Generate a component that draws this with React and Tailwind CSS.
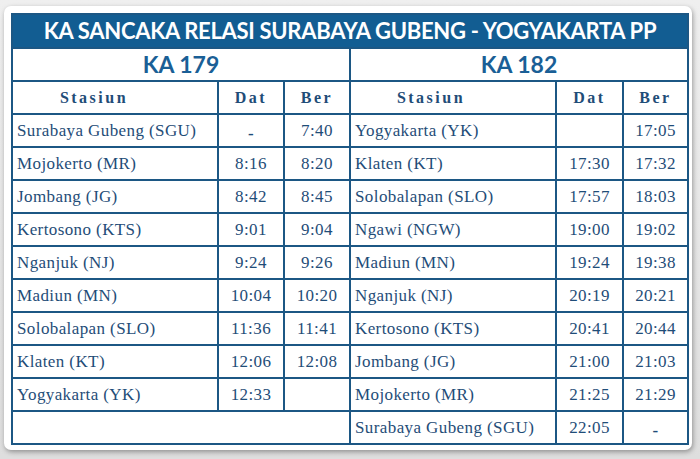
const LEFT = [
  ["Surabaya Gubeng (SGU)", "-", "7:40"],
  ["Mojokerto (MR)", "8:16", "8:20"],
  ["Jombang (JG)", "8:42", "8:45"],
  ["Kertosono (KTS)", "9:01", "9:04"],
  ["Nganjuk (NJ)", "9:24", "9:26"],
  ["Madiun (MN)", "10:04", "10:20"],
  ["Solobalapan (SLO)", "11:36", "11:41"],
  ["Klaten (KT)", "12:06", "12:08"],
  ["Yogyakarta (YK)", "12:33", ""],
];

const RIGHT = [
  ["Yogyakarta (YK)", "", "17:05"],
  ["Klaten (KT)", "17:30", "17:32"],
  ["Solobalapan (SLO)", "17:57", "18:03"],
  ["Ngawi (NGW)", "19:00", "19:02"],
  ["Madiun (MN)", "19:24", "19:38"],
  ["Nganjuk (NJ)", "20:19", "20:21"],
  ["Kertosono (KTS)", "20:41", "20:44"],
  ["Jombang (JG)", "21:00", "21:03"],
  ["Mojokerto (MR)", "21:25", "21:29"],
  ["Surabaya Gubeng (SGU)", "22:05", "-"],
];

const cell = "border-2 border-[#1c5784] h-[33px] p-0 leading-none";
const serif = { fontFamily: '"Liberation Serif", "Times New Roman", serif' };
const sans = { fontFamily: 'Lato, "Open Sans", sans-serif' };

function Time({ v }) {
  if (v === "-") return <span className="inline-block translate-y-[3px] font-bold">-</span>;
  return v;
}

function Row({ l, r }) {
  return (
    <tr className="text-[17px] text-[#1f4d78] tracking-[0.4px]" style={serif}>
      {l ? (
        <>
          <td className={`${cell} pl-[4px] text-left`}>{l[0]}</td>
          <td className={`${cell} text-center`}><Time v={l[1]} /></td>
          <td className={`${cell} text-center`}><Time v={l[2]} /></td>
        </>
      ) : (
        <td colSpan={3} className={cell}></td>
      )}
      <td className={`${cell} pl-[4px] text-left`}>{r[0]}</td>
      <td className={`${cell} text-center`}><Time v={r[1]} /></td>
      <td className={`${cell} text-center`}><Time v={r[2]} /></td>
    </tr>
  );
}

export default function App() {
  const rows = RIGHT.map((r, i) => ({ l: LEFT[i], r }));
  const head = "border-2 border-[#1c5784] h-[33px] p-0 leading-none text-center font-bold text-[16px] text-[#1f4d78] tracking-[2.5px]";
  const ka = "border-2 border-[#1c5784] h-[33px] p-0 leading-none text-center font-bold text-[23px] text-[#1a5f96]";
  return (
    <div className="w-[700px] h-[459px] bg-gradient-to-b from-[#efefef] to-[#dedede] pt-[6px] pl-[4px]">
      <div className="w-[688px] h-[444px] bg-white rounded-[7px] shadow-[1px_2px_5px_rgba(0,0,0,0.35)] pt-[7px] pl-[7px]">
        <table className="table-fixed border-collapse w-[676px]">
          <colgroup>
            <col className="w-[206px]" />
            <col className="w-[66px]" />
            <col className="w-[66px]" />
            <col className="w-[206px]" />
            <col className="w-[67px]" />
            <col className="w-[65px]" />
          </colgroup>
          <tbody>
            <tr>
              <td
                colSpan={6}
                className="bg-[#125d92] border-2 border-[#1c5784] h-[34px] p-0 leading-none text-center text-white font-bold text-[22px] tracking-[-0.3px]"
                style={sans}
              >
                KA SANCAKA RELASI SURABAYA GUBENG - YOGYAKARTA PP
              </td>
            </tr>
            <tr style={sans}>
              <td colSpan={3} className={ka}>KA 179</td>
              <td colSpan={3} className={ka}>KA 182</td>
            </tr>
            <tr style={serif}>
              <td className={`${head} pr-[42px]`}>Stasiun</td>
              <td className={head}>Dat</td>
              <td className={head}>Ber</td>
              <td className={`${head} pr-[44px]`}>Stasiun</td>
              <td className={head}>Dat</td>
              <td className={head}>Ber</td>
            </tr>
            {rows.map((x, i) => (
              <Row key={i} l={x.l} r={x.r} />
            ))}
          </tbody>
        </table>
      </div>
    </div>
  );
}
